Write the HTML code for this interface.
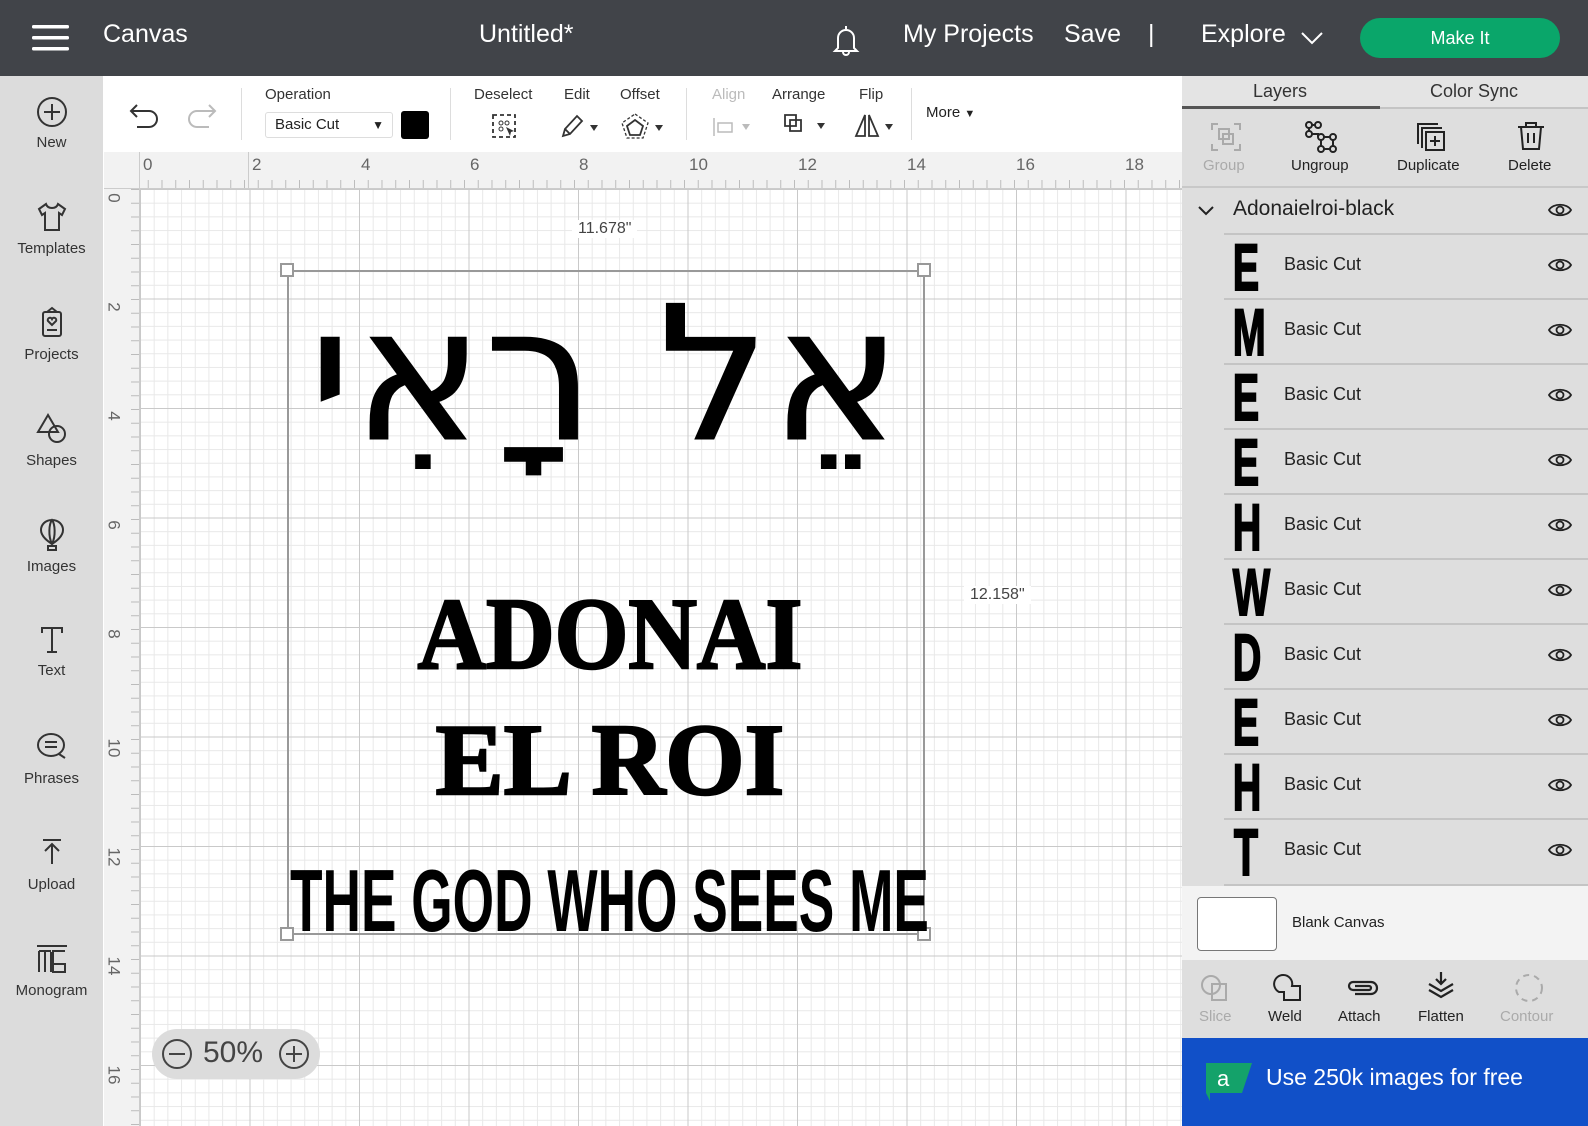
<!DOCTYPE html>
<html><head><meta charset="utf-8"><style>
*{margin:0;padding:0;box-sizing:border-box}
body{width:1588px;height:1126px;overflow:hidden;background:#fff;font-family:"Liberation Sans",sans-serif;position:relative;color:#222}
.abs{position:absolute}
#top{left:0;top:0;width:1588px;height:76px;background:#414449;color:#fff}
#top .t{position:absolute;top:20px;font-size:25px;color:#fff}
#side{left:0;top:76px;width:103px;height:1050px;background:#dcdcdc}
.si{position:absolute;left:0;width:103px;text-align:center;font-size:15px;color:#333}
.si svg{display:block;margin:0 auto 6px}
#tb{left:103px;top:76px;width:1079px;height:76px;background:#fff}
.lbl{position:absolute;top:10px;font-size:15px;color:#333}
.sep{position:absolute;top:12px;width:1px;height:52px;background:#ddd}
#rtop{left:104px;top:152px;width:1078px;height:37px;background:#f2f2f2;border-bottom:1px solid #ccc;
background-image:linear-gradient(to right,#bbb 1px,transparent 1px);background-size:13.75px 8px;background-repeat:repeat-x;background-position:140px bottom}
#rleft{left:104px;top:189px;width:36px;height:937px;background:#f2f2f2;border-right:1px solid #ccc;
background-image:linear-gradient(to bottom,#bbb 1px,transparent 1px);background-size:8px 13.75px;background-repeat:repeat-y;background-position:right -0px}
#grid{left:140px;top:189px;width:1042px;height:937px;background-color:#fff;
background-image:linear-gradient(to right,#c9c9c9 1px,transparent 1px),linear-gradient(to bottom,#c9c9c9 1px,transparent 1px),linear-gradient(to right,#e8e8e8 1px,transparent 1px),linear-gradient(to bottom,#e8e8e8 1px,transparent 1px);
background-size:109.5px 109.5px,109.5px 109.5px,13.69px 13.69px,13.69px 13.69px}
.rn{position:absolute;font-size:17px;color:#666}
.rv{position:absolute;font-size:17px;color:#666;transform:rotate(90deg)}
#rp{left:1182px;top:76px;width:406px;height:1050px;background:#dedede}
.lr{position:absolute;left:42px;width:364px;height:65px;border-top:2px solid #c4c4c4}
.lr .L{position:absolute;left:0;top:2px;width:44px;text-align:center;font:bold 66px/60px "Liberation Sans",sans-serif;color:#000;transform:scaleX(.6);-webkit-text-stroke:2px #000}
.lr .n{position:absolute;left:60px;top:19px;font-size:18px;color:#222}
.eye{position:absolute;right:16px;top:22px}
.h{width:14px;height:14px;border:2px solid #999;background:#fff;position:absolute}
</style></head><body>
<div id="top" class="abs">
 <svg class="abs" style="left:32px;top:25px" width="37" height="26"><rect y="0" width="37" height="3.5" rx="1.5" fill="#fff"/><rect y="11" width="37" height="3.5" rx="1.5" fill="#fff"/><rect y="22" width="37" height="3.5" rx="1.5" fill="#fff"/></svg>
 <div class="t" style="left:103px">Canvas</div>
 <div class="t" style="left:479px">Untitled*</div>
 <svg class="abs" style="left:831px;top:23px" width="30" height="34" viewBox="0 0 30 34"><path d="M15 3v3M7 25V15a8 8 0 0 1 16 0v10l3 3H4z M12 29a3 3 0 0 0 6 0" fill="none" stroke="#fff" stroke-width="2"/></svg>
 <div class="t" style="left:903px">My Projects</div>
 <div class="t" style="left:1064px">Save</div>
 <div class="t" style="left:1148px">|</div>
 <div class="t" style="left:1201px">Explore</div>
 <svg class="abs" style="left:1300px;top:31px" width="24" height="14"><path d="M2 2l10 10 10-10" fill="none" stroke="#fff" stroke-width="2"/></svg>
 <div class="abs" style="left:1360px;top:18px;width:200px;height:40px;border-radius:20px;background:#0aa66a;color:#fff;font-size:18px;text-align:center;line-height:40px">Make It</div>
</div>

<div id="side" class="abs">
 <div class="si" style="top:20px"><svg width="32" height="32"><circle cx="16" cy="16" r="14" fill="none" stroke="#333" stroke-width="2"/><path d="M16 8v16M8 16h16" stroke="#333" stroke-width="2"/></svg>New</div>
 <div class="si" style="top:124px"><svg width="32" height="34"><path d="M10 4l-7 5 3 6 3-2v17h14V13l3 2 3-6-7-5c-1 3-3 4-6 4s-5-1-6-4z" fill="none" stroke="#333" stroke-width="2"/></svg>Templates</div>
 <div class="si" style="top:230px"><svg width="28" height="34"><rect x="5" y="6" width="18" height="24" rx="2" fill="none" stroke="#333" stroke-width="2"/><path d="M9 6l5-4 5 4M9 24h10M14 19l-4-4a2 2 0 0 1 4-2 2 2 0 0 1 4 2z" fill="none" stroke="#333" stroke-width="2"/></svg>Projects</div>
 <div class="si" style="top:336px"><svg width="34" height="34"><path d="M13 3L3 20h20z" fill="none" stroke="#333" stroke-width="2"/><circle cx="22" cy="22" r="8" fill="none" stroke="#333" stroke-width="2"/></svg>Shapes</div>
 <div class="si" style="top:442px"><svg width="30" height="34"><path d="M15 2c-7 0-11 5-11 10 0 7 8 12 11 14 3-2 11-7 11-14 0-5-4-10-11-10zM15 2c-3 4-4 16 0 24 4-8 3-20 0-24zM11 28h8v4h-8z" fill="none" stroke="#333" stroke-width="2"/></svg>Images</div>
 <div class="si" style="top:548px"><svg width="30" height="32"><path d="M5 9V4h20v5M15 4v24M10 28h10" fill="none" stroke="#333" stroke-width="2"/></svg>Text</div>
 <div class="si" style="top:654px"><svg width="34" height="34"><ellipse cx="16" cy="15" rx="13" ry="11" fill="none" stroke="#333" stroke-width="2"/><path d="M24 24l6 4M10 12h12M10 17h12" fill="none" stroke="#333" stroke-width="2"/></svg>Phrases</div>
 <div class="si" style="top:760px"><svg width="30" height="34"><path d="M6 4h18M15 28V8M8 15l7-7 7 7" fill="none" stroke="#333" stroke-width="2"/></svg>Upload</div>
 <div class="si" style="top:866px"><svg width="34" height="34"><path d="M2 4h30M4 30V9M4 9h12M10 30V10M16 30V10M18 22h12v8H18V9h12" fill="none" stroke="#333" stroke-width="2"/></svg>Monogram</div>
</div>

<div id="tb" class="abs">
 <svg class="abs" style="left:26px;top:27px" width="32" height="26"><path d="M8 2L2 8l6 6M2 8h18a8 8 0 0 1 0 16H8" fill="none" stroke="#333" stroke-width="2"/></svg>
 <svg class="abs" style="left:82px;top:27px" width="32" height="26"><path d="M24 2l6 6-6 6M30 8H12a8 8 0 0 0 0 16h12" fill="none" stroke="#bbb" stroke-width="2"/></svg>
 <div class="sep" style="left:138px"></div>
 <div class="lbl" style="left:162px">Operation</div>
 <div class="abs" style="left:162px;top:36px;width:128px;height:26px;border:1px solid #ddd;border-radius:3px;font-size:15px;line-height:24px;padding-left:9px">Basic Cut<span style="position:absolute;right:8px;font-size:12px">▼</span></div>
 <div class="abs" style="left:298px;top:35px;width:28px;height:28px;background:#000;border-radius:3px"></div>
 <div class="sep" style="left:347px"></div>
 <div class="lbl" style="left:371px">Deselect</div>
 <svg class="abs" style="left:388px;top:37px" width="28" height="28"><rect x="2" y="2" width="22" height="22" fill="none" stroke="#333" stroke-width="1.8" stroke-dasharray="4 3"/><circle cx="10" cy="10" r="2" fill="none" stroke="#333"/><circle cx="16" cy="10" r="2" fill="none" stroke="#333"/><circle cx="10" cy="16" r="2" fill="none" stroke="#333"/><path d="M15 14l8 4-3 1-1 4z" fill="#333"/></svg>
 <div class="lbl" style="left:461px">Edit</div>
 <svg class="abs" style="left:456px;top:36px" width="44" height="28"><path d="M4 24l2-7L18 4l5 5-12 13zM6 17l5 5" fill="none" stroke="#333" stroke-width="1.8"/><path d="M31 13h8l-4 6z" fill="#333"/></svg>
 <div class="lbl" style="left:517px">Offset</div>
 <svg class="abs" style="left:518px;top:36px" width="46" height="30"><path d="M14 8l8 6-3 9h-10l-3-9z" fill="none" stroke="#333" stroke-width="1.8"/><path d="M14 2l13 9-5 15H6L1 11z" fill="none" stroke="#333" stroke-width="1.3" stroke-dasharray="3 2"/><path d="M34 13h8l-4 6z" fill="#333"/></svg>
 <div class="sep" style="left:583px"></div>
 <div class="lbl" style="left:609px;color:#bbb">Align</div>
 <svg class="abs" style="left:609px;top:40px" width="44" height="22"><path d="M2 2v18M6 7h14v9H6z" fill="none" stroke="#bbb" stroke-width="1.5"/><path d="M30 8h8l-4 6z" fill="#bbb"/></svg>
 <div class="lbl" style="left:669px">Arrange</div>
 <svg class="abs" style="left:680px;top:37px" width="44" height="26"><path d="M2 2h11v11H2zM7 7h11v11H7z" fill="none" stroke="#333" stroke-width="1.8"/><path d="M34 10h8l-4 6z" fill="#333"/></svg>
 <div class="lbl" style="left:756px">Flip</div>
 <svg class="abs" style="left:750px;top:36px" width="44" height="28"><path d="M12 3L3 24h9zM16 3l9 21h-9z" fill="none" stroke="#333" stroke-width="1.8"/><path d="M32 12h8l-4 6z" fill="#333"/></svg>
 <div class="sep" style="left:808px"></div>
 <div class="abs" style="left:823px;top:28px;font-size:15px">More <span style="font-size:11px">▼</span></div>
</div>

<div id="grid" class="abs"></div>
<div id="rtop" class="abs"></div>
<div id="rleft" class="abs"></div>
<div class="abs" style="left:104px;top:152px;width:36px;height:37px;background:#f2f2f2;border-right:1px solid #ccc;border-bottom:1px solid #ccc"></div>
<div class="abs" style="left:248px;top:152px;width:1px;height:37px;background:#ccc"></div>
<div class="rn" style="left:143px;top:155px">0</div><div class="rn" style="left:252px;top:155px">2</div><div class="rn" style="left:361px;top:155px">4</div><div class="rn" style="left:470px;top:155px">6</div><div class="rn" style="left:579px;top:155px">8</div><div class="rn" style="left:689px;top:155px">10</div><div class="rn" style="left:798px;top:155px">12</div><div class="rn" style="left:907px;top:155px">14</div><div class="rn" style="left:1016px;top:155px">16</div><div class="rn" style="left:1125px;top:155px">18</div>
<div class="rv" style="left:109px;top:188px">0</div><div class="rv" style="left:109px;top:297px">2</div><div class="rv" style="left:109px;top:406px">4</div><div class="rv" style="left:109px;top:515px">6</div><div class="rv" style="left:109px;top:624px">8</div><div class="rv" style="left:104px;top:738px">10</div><div class="rv" style="left:104px;top:847px">12</div><div class="rv" style="left:104px;top:956px">14</div><div class="rv" style="left:104px;top:1065px">16</div>

<!-- selection -->
<div class="abs" style="left:287px;top:270px;width:638px;height:665px;border:2px solid #999"></div>
<div class="h" style="left:280px;top:263px"></div><div class="h" style="left:917px;top:263px"></div>
<div class="h" style="left:280px;top:927px"></div><div class="h" style="left:917px;top:927px"></div>
<div class="abs" style="left:572px;top:220px;background:#fff;padding:0 6px;font-size:16px;color:#444">11.678"</div>
<div class="abs" style="left:964px;top:586px;background:#fff;padding:0 6px;font-size:16px;color:#444">12.158"</div>

<div class="abs" style="left:200px;top:282px;width:810px;text-align:center;white-space:nowrap;font:normal 186px/186px 'DejaVu Sans',sans-serif;color:#000;direction:rtl;transform:scaleX(1.06);-webkit-text-stroke:1px #000">אֵל רָאִי</div>
<div class="abs" style="left:380px;top:580px;width:460px;text-align:center;white-space:nowrap;font:900 102px/110px 'Liberation Serif',serif;color:#000;transform:scaleX(0.93);-webkit-text-stroke:2.5px #000">ADONAI</div>
<div class="abs" style="left:380px;top:706px;width:460px;text-align:center;white-space:nowrap;font:900 102px/110px 'Liberation Serif',serif;color:#000;-webkit-text-stroke:2.5px #000">EL ROI</div>
<div class="abs" style="left:290px;top:856px;width:1100px;white-space:nowrap;font:bold 88px/90px 'Liberation Sans',sans-serif;color:#000;transform:scaleX(0.605);transform-origin:left">THE GOD WHO SEES ME</div>

<div class="abs" style="left:152px;top:1029px;width:168px;height:50px;border-radius:25px;background:#dcdcdc"></div>
<svg class="abs" style="left:161px;top:1038px" width="32" height="32"><circle cx="16" cy="16" r="14" fill="none" stroke="#444" stroke-width="2"/><path d="M8 16h16" stroke="#444" stroke-width="2"/></svg>
<div class="abs" style="left:203px;top:1036px;font-size:30px;color:#444">50%</div>
<svg class="abs" style="left:278px;top:1038px" width="32" height="32"><circle cx="16" cy="16" r="14" fill="none" stroke="#444" stroke-width="2"/><path d="M8 16h16M16 8v16" stroke="#444" stroke-width="2"/></svg>

<div id="rp" class="abs">
 <div class="abs" style="left:0;top:0;width:406px;height:32px;background:#e4e4e4"></div>
 <div class="abs" style="left:71px;top:5px;font-size:18px;color:#333">Layers</div>
 <div class="abs" style="left:248px;top:5px;font-size:18px;color:#333">Color Sync</div>
 <div class="abs" style="left:0;top:30px;width:198px;height:3px;background:#555"></div>
 <div class="abs" style="left:198px;top:31px;width:208px;height:2px;background:#c4c4c4"></div>
 <svg class="abs" style="left:28px;top:46px" width="32" height="30"><path d="M2 8V2h6M24 2h6v6M30 22v6h-6M8 28H2v-6" fill="none" stroke="#aaa" stroke-width="2"/><rect x="9" y="7" width="10" height="10" fill="none" stroke="#aaa" stroke-width="2"/><rect x="13" y="12" width="10" height="10" fill="none" stroke="#aaa" stroke-width="2"/></svg>
 <div class="abs" style="left:21px;top:81px;font-size:15px;color:#aaa">Group</div>
 <svg class="abs" style="left:122px;top:44px" width="34" height="34"><g fill="none" stroke="#222" stroke-width="2"><circle cx="5" cy="5" r="3"/><circle cx="14" cy="5" r="3"/><circle cx="5" cy="14" r="3"/><circle cx="17" cy="17" r="3"/><circle cx="29" cy="17" r="3"/><circle cx="17" cy="29" r="3"/><circle cx="29" cy="29" r="3"/><path d="M8 5h3M5 8v3M20 17h6M17 20v6M20 29h6M29 20v6M8 14h6v3"/></g></svg>
 <div class="abs" style="left:109px;top:81px;font-size:15px;color:#222">Ungroup</div>
 <svg class="abs" style="left:234px;top:46px" width="32" height="32"><path d="M2 22V2h20" fill="none" stroke="#222" stroke-width="2"/><path d="M6 26V6h20" fill="none" stroke="#222" stroke-width="2"/><rect x="10" y="10" width="18" height="18" fill="none" stroke="#222" stroke-width="2"/><path d="M19 14v10M14 19h10" stroke="#222" stroke-width="2"/></svg>
 <div class="abs" style="left:215px;top:81px;font-size:15px;color:#222">Duplicate</div>
 <svg class="abs" style="left:334px;top:45px" width="30" height="32"><path d="M2 6h26M10 6V2h10v4M5 6l2 22h16l2-22M12 12v10M18 12v10" fill="none" stroke="#222" stroke-width="2"/></svg>
 <div class="abs" style="left:326px;top:81px;font-size:15px;color:#222">Delete</div>
 <div class="abs" style="left:0;top:110px;width:406px;height:2px;background:#c8c8c8"></div>
 <svg class="abs" style="left:15px;top:129px" width="18" height="12"><path d="M2 2l7 7 7-7" fill="none" stroke="#222" stroke-width="2"/></svg>
 <div class="abs" style="left:51px;top:121px;font-size:21px;color:#222">Adonaielroi-black</div>
 <svg class="eye" style="top:126px;right:16px" width="24" height="16"><path d="M1 8C5 1 19 1 23 8 19 15 5 15 1 8z" fill="none" stroke="#222" stroke-width="1.8"/><circle cx="12" cy="8" r="3.5" fill="none" stroke="#222" stroke-width="1.8"/></svg>

 <div class="lr" style="top:157px"><div class="L">E</div><div class="n">Basic Cut</div><svg class="eye" width="24" height="16"><path d="M1 8C5 1 19 1 23 8 19 15 5 15 1 8z" fill="none" stroke="#222" stroke-width="1.8"/><circle cx="12" cy="8" r="3.5" fill="none" stroke="#222" stroke-width="1.8"/></svg></div>
 <div class="lr" style="top:222px"><div class="L">M</div><div class="n">Basic Cut</div><svg class="eye" width="24" height="16"><path d="M1 8C5 1 19 1 23 8 19 15 5 15 1 8z" fill="none" stroke="#222" stroke-width="1.8"/><circle cx="12" cy="8" r="3.5" fill="none" stroke="#222" stroke-width="1.8"/></svg></div>
 <div class="lr" style="top:287px"><div class="L">E</div><div class="n">Basic Cut</div><svg class="eye" width="24" height="16"><path d="M1 8C5 1 19 1 23 8 19 15 5 15 1 8z" fill="none" stroke="#222" stroke-width="1.8"/><circle cx="12" cy="8" r="3.5" fill="none" stroke="#222" stroke-width="1.8"/></svg></div>
 <div class="lr" style="top:352px"><div class="L">E</div><div class="n">Basic Cut</div><svg class="eye" width="24" height="16"><path d="M1 8C5 1 19 1 23 8 19 15 5 15 1 8z" fill="none" stroke="#222" stroke-width="1.8"/><circle cx="12" cy="8" r="3.5" fill="none" stroke="#222" stroke-width="1.8"/></svg></div>
 <div class="lr" style="top:417px"><div class="L">H</div><div class="n">Basic Cut</div><svg class="eye" width="24" height="16"><path d="M1 8C5 1 19 1 23 8 19 15 5 15 1 8z" fill="none" stroke="#222" stroke-width="1.8"/><circle cx="12" cy="8" r="3.5" fill="none" stroke="#222" stroke-width="1.8"/></svg></div>
 <div class="lr" style="top:482px"><div class="L">W</div><div class="n">Basic Cut</div><svg class="eye" width="24" height="16"><path d="M1 8C5 1 19 1 23 8 19 15 5 15 1 8z" fill="none" stroke="#222" stroke-width="1.8"/><circle cx="12" cy="8" r="3.5" fill="none" stroke="#222" stroke-width="1.8"/></svg></div>
 <div class="lr" style="top:547px"><div class="L">D</div><div class="n">Basic Cut</div><svg class="eye" width="24" height="16"><path d="M1 8C5 1 19 1 23 8 19 15 5 15 1 8z" fill="none" stroke="#222" stroke-width="1.8"/><circle cx="12" cy="8" r="3.5" fill="none" stroke="#222" stroke-width="1.8"/></svg></div>
 <div class="lr" style="top:612px"><div class="L">E</div><div class="n">Basic Cut</div><svg class="eye" width="24" height="16"><path d="M1 8C5 1 19 1 23 8 19 15 5 15 1 8z" fill="none" stroke="#222" stroke-width="1.8"/><circle cx="12" cy="8" r="3.5" fill="none" stroke="#222" stroke-width="1.8"/></svg></div>
 <div class="lr" style="top:677px"><div class="L">H</div><div class="n">Basic Cut</div><svg class="eye" width="24" height="16"><path d="M1 8C5 1 19 1 23 8 19 15 5 15 1 8z" fill="none" stroke="#222" stroke-width="1.8"/><circle cx="12" cy="8" r="3.5" fill="none" stroke="#222" stroke-width="1.8"/></svg></div>
 <div class="lr" style="top:742px;height:68px;border-bottom:2px solid #c4c4c4"><div class="L">T</div><div class="n">Basic Cut</div><svg class="eye" width="24" height="16"><path d="M1 8C5 1 19 1 23 8 19 15 5 15 1 8z" fill="none" stroke="#222" stroke-width="1.8"/><circle cx="12" cy="8" r="3.5" fill="none" stroke="#222" stroke-width="1.8"/></svg></div>

 <div class="abs" style="left:0;top:810px;width:406px;height:74px;background:#f3f3f3"></div>
 <div class="abs" style="left:15px;top:821px;width:80px;height:54px;background:#fff;border:1.5px solid #777;border-radius:4px"></div>
 <div class="abs" style="left:110px;top:838px;font-size:15px;color:#222">Blank Canvas</div>

 <svg class="abs" style="left:18px;top:898px" width="32" height="30"><circle cx="11" cy="11" r="9" fill="none" stroke="#aaa" stroke-width="2"/><path d="M12 10h14v16H12z" fill="none" stroke="#aaa" stroke-width="2"/></svg>
 <div class="abs" style="left:17px;top:932px;font-size:15px;color:#aaa">Slice</div>
 <svg class="abs" style="left:89px;top:896px" width="32" height="32"><path d="M12 3a9 9 0 0 0-4 17l5 0v8h16V14h-8A9 9 0 0 0 12 3z" fill="none" stroke="#222" stroke-width="2"/></svg>
 <div class="abs" style="left:86px;top:932px;font-size:15px;color:#222">Weld</div>
 <svg class="abs" style="left:163px;top:900px" width="34" height="22"><path d="M10 18h16a6 6 0 0 0 0-12H8a4 4 0 0 0 0 8h16a2 2 0 0 0 0-4H10" fill="none" stroke="#222" stroke-width="2.2"/></svg>
 <div class="abs" style="left:156px;top:932px;font-size:15px;color:#222">Attach</div>
 <svg class="abs" style="left:243px;top:894px" width="32" height="32"><path d="M16 2v12M11 9l5 5 5-5M4 14l12 7 12-7M4 20l12 7 12-7" fill="none" stroke="#222" stroke-width="2.2"/></svg>
 <div class="abs" style="left:236px;top:932px;font-size:15px;color:#222">Flatten</div>
 <svg class="abs" style="left:331px;top:896px" width="32" height="32"><circle cx="16" cy="16" r="13" fill="none" stroke="#aaa" stroke-width="2" stroke-dasharray="6 5"/></svg>
 <div class="abs" style="left:318px;top:932px;font-size:15px;color:#aaa">Contour</div>

 <div class="abs" style="left:0;top:962px;width:406px;height:88px;background:#1150c8"></div>
 <svg class="abs" style="left:22px;top:985px" width="50" height="42"><path d="M6 2h42l-10 30H6v8l-4-8V2z" fill="#14a26a"/><text x="13" y="25" font-family="Liberation Sans" font-size="22" fill="#fff">a</text></svg>
 <div class="abs" style="left:84px;top:988px;font-size:23px;color:#fff">Use 250k images for free</div>
</div>
</body></html>
